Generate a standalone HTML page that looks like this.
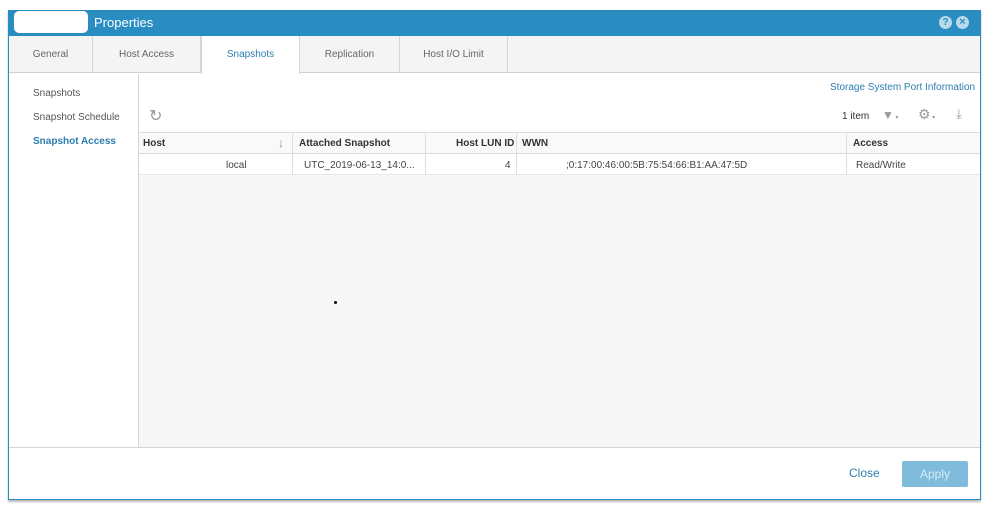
<!DOCTYPE html>
<html><head><style>
*{box-sizing:border-box;margin:0;padding:0}
body{width:995px;height:514px;background:#fff;font-family:"Liberation Sans",Arial,sans-serif;position:relative;overflow:hidden;font-size:10px;color:#444}
.abs{position:absolute}
#dlg{left:8px;top:10px;width:973px;height:490px;border:1px solid #2a8cc0;border-top:none;box-shadow:0 2px 2px #bbb}
#title{left:8px;top:10px;width:973px;height:26px;background:#2a8dc2;color:#fff;font-size:13px}
#tabs{left:9px;top:36px;width:971px;height:37px;background:#f4f4f4;border-bottom:1px solid #d0d0d0}
.tab{position:absolute;top:0;height:37px;line-height:37px;text-align:center;font-size:10px;color:#666;border-right:1px solid #d6d6d6}
.col{position:absolute;top:0;height:100%;border-right:1px solid #ddd}
</style></head><body>
<div id="dlg" class="abs"></div>
<div id="title" class="abs">
 <div class="abs" style="left:6px;top:1px;width:74px;height:22px;background:#fff;border-radius:5px"></div>
 <div class="abs" style="left:86px;top:5px">Properties</div>
 <div class="abs" style="left:931px;top:6px;width:13px;height:13px;border-radius:50%;background:#b8d9ec;color:#2a8dc2;font-size:10px;font-weight:bold;text-align:center;line-height:13px">?</div>
 <div class="abs" style="left:948px;top:6px;width:13px;height:13px;border-radius:50%;background:#b8d9ec;color:#2a8dc2;font-size:11px;font-weight:bold;text-align:center;line-height:13px">×</div>
</div>
<div id="tabs" class="abs">
 <div class="tab" style="left:0;width:84px">General</div>
 <div class="tab" style="left:84px;width:108px">Host Access</div>
 <div class="tab" style="left:192px;width:99px;background:#fff;height:38px;color:#2a7fb0;border-left:1px solid #d6d6d6">Snapshots</div>
 <div class="tab" style="left:291px;width:100px">Replication</div>
 <div class="tab" style="left:391px;width:108px">Host I/O Limit</div>
</div>
<div class="abs" style="left:33px;top:88px;color:#555">Snapshots</div>
<div class="abs" style="left:33px;top:112px;color:#555">Snapshot Schedule</div>
<div class="abs" style="left:33px;top:136px;color:#2a7fb0;font-weight:bold">Snapshot Access</div>
<div class="abs" style="left:138px;top:74px;width:1px;height:373px;background:#d6d6d6"></div>
<div class="abs" style="left:830px;top:82px;color:#2a7fb0">Storage System Port Information</div>
<div class="abs" style="left:149px;top:106px;font-size:16px;color:#999">&#x21bb;</div>
<div class="abs" style="left:842px;top:111px;color:#333">1 item</div>
<div class="abs" style="left:882px;top:108px;color:#999;font-size:12px">&#x25BC;<span style="font-size:6px"> ▾</span></div>
<div class="abs" style="left:918px;top:106px;color:#999;font-size:14px">&#x2699;<span style="font-size:6px"> ▾</span></div>
<div class="abs" style="left:956px;top:106px;color:#999;font-size:13px">&#x2913;</div>
<div class="abs" style="left:139px;top:175px;width:841px;height:272px;background:#f7f7f7"></div>
<div class="abs" style="left:139px;top:132px;width:841px;height:43px;border-top:1px solid #ddd">
 <div class="abs" style="left:0;top:0;width:841px;height:21px;background:#f9f9f9;border-bottom:1px solid #ddd"></div>
 <div class="abs" style="left:0;top:21px;width:841px;height:21px;background:#fff;border-bottom:1px solid #e6e6e6"></div>
 <div class="col" style="left:0;width:154px"></div>
 <div class="col" style="left:154px;width:133px"></div>
 <div class="col" style="left:287px;width:91px"></div>
 <div class="col" style="left:378px;width:330px"></div>
 <div class="abs" style="left:4px;top:5px;font-weight:bold;color:#333">Host</div>
 <div class="abs" style="left:139px;top:3px;color:#888;font-size:12px">↓</div>
 <div class="abs" style="left:160px;top:5px;font-weight:bold;color:#333">Attached Snapshot</div>
 <div class="abs" style="left:317px;top:5px;font-weight:bold;color:#333">Host LUN ID</div>
 <div class="abs" style="left:383px;top:5px;font-weight:bold;color:#333">WWN</div>
 <div class="abs" style="left:714px;top:5px;font-weight:bold;color:#333">Access</div>
 <div class="abs" style="left:87px;top:27px">local</div>
 <div class="abs" style="left:165px;top:27px">UTC_2019-06-13_14:0...</div>
 <div class="abs" style="left:366px;top:27px">4</div>
 <div class="abs" style="left:427px;top:27px">;0:17:00:46:00:5B:75:54:66:B1:AA:47:5D</div>
 <div class="abs" style="left:717px;top:27px">Read/Write</div>
</div>
<div class="abs" style="left:334px;top:301px;width:3px;height:3px;background:#000;border-radius:50%"></div>
<div class="abs" style="left:9px;top:447px;width:971px;height:1px;background:#d6d6d6"></div>
<div class="abs" style="left:849px;top:466px;color:#2a7fb0;font-size:12px">Close</div>
<div class="abs" style="left:902px;top:461px;width:66px;height:26px;background:#7fbcdc;border-radius:2px;color:#d8ecf6;font-size:12px;text-align:center;line-height:26px">Apply</div>
</body></html>
